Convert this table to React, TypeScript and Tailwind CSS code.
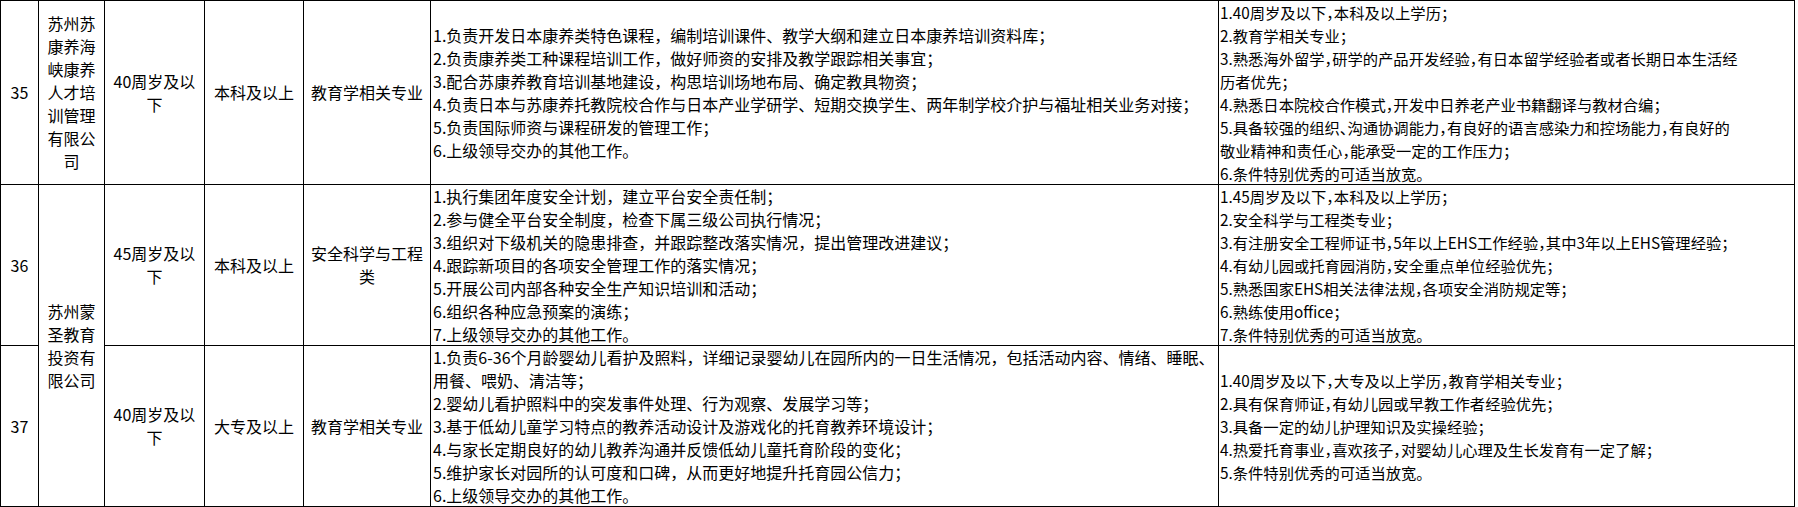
import React from "react";

const font = "font-['Noto_Sans_CJK_SC','Noto_Sans',sans-serif]";

function Center({ lines, className = "" }: { lines: string[]; className?: string }) {
  return (
    <div
      className={`border-r border-b border-black flex flex-col items-center justify-center text-center text-[16px] leading-[23px] text-black overflow-visible ${className}`}
    >
      {lines.map((l, i) => (
        <div key={i} className="whitespace-nowrap">
          {l}
        </div>
      ))}
    </div>
  );
}

function Duties({ lines }: { lines: string[] }) {
  return (
    <div className="border-r border-b border-black flex flex-col justify-center pl-[2px] text-[16px] leading-[23px] text-black overflow-visible">
      {lines.map((l, i) => (
        <div key={i} className="whitespace-nowrap">
          {l}
        </div>
      ))}
    </div>
  );
}

function Reqs({ lines }: { lines: string[] }) {
  return (
    <div className="border-r border-b border-black flex flex-col justify-center pl-[1px] text-[15.3px] leading-[23px] text-black overflow-visible [font-feature-settings:'halt']">
      {lines.map((l, i) => (
        <div key={i} className="whitespace-nowrap">
          {l}
        </div>
      ))}
    </div>
  );
}

export default function App() {
  return (
    <div className={`bg-white w-[1798px] h-[507px] ${font}`}>
      <div className="grid w-[1795px] grid-cols-[38px_66px_100px_99px_127px_788px_576px] grid-rows-[184px_161px_161px] border-l border-t border-black">
        {/* Row 35 */}
        <Center lines={["35"]} />
        <Center lines={["苏州苏", "康养海", "峡康养", "人才培", "训管理", "有限公", "司"]} />
        <Center lines={["40周岁及以", "下"]} />
        <Center lines={["本科及以上"]} />
        <Center lines={["教育学相关专业"]} />
        <Duties
          lines={[
            "1.负责开发日本康养类特色课程，编制培训课件、教学大纲和建立日本康养培训资料库；",
            "2.负责康养类工种课程培训工作，做好师资的安排及教学跟踪相关事宜；",
            "3.配合苏康养教育培训基地建设，构思培训场地布局、确定教具物资；",
            "4.负责日本与苏康养托教院校合作与日本产业学研学、短期交换学生、两年制学校介护与福址相关业务对接；",
            "5.负责国际师资与课程研发的管理工作；",
            "6.上级领导交办的其他工作。",
          ]}
        />
        <Reqs
          lines={[
            "1.40周岁及以下，本科及以上学历；",
            "2.教育学相关专业；",
            "3.熟悉海外留学，研学的产品开发经验，有日本留学经验者或者长期日本生活经",
            "历者优先；",
            "4.熟悉日本院校合作模式，开发中日养老产业书籍翻译与教材合编；",
            "5.具备较强的组织、沟通协调能力，有良好的语言感染力和控场能力，有良好的",
            "敬业精神和责任心，能承受一定的工作压力；",
            "6.条件特别优秀的可适当放宽。",
          ]}
        />

        {/* Row 36 */}
        <Center lines={["36"]} />
        <Center lines={["苏州蒙", "圣教育", "投资有", "限公司"]} className="row-span-2" />
        <Center lines={["45周岁及以", "下"]} />
        <Center lines={["本科及以上"]} />
        <Center lines={["安全科学与工程", "类"]} />
        <Duties
          lines={[
            "1.执行集团年度安全计划，建立平台安全责任制；",
            "2.参与健全平台安全制度，检查下属三级公司执行情况；",
            "3.组织对下级机关的隐患排查，并跟踪整改落实情况，提出管理改进建议；",
            "4.跟踪新项目的各项安全管理工作的落实情况；",
            "5.开展公司内部各种安全生产知识培训和活动；",
            "6.组织各种应急预案的演练；",
            "7.上级领导交办的其他工作。",
          ]}
        />
        <Reqs
          lines={[
            "1.45周岁及以下，本科及以上学历；",
            "2.安全科学与工程类专业；",
            "3.有注册安全工程师证书，5年以上EHS工作经验，其中3年以上EHS管理经验；",
            "4.有幼儿园或托育园消防，安全重点单位经验优先；",
            "5.熟悉国家EHS相关法律法规，各项安全消防规定等；",
            "6.熟练使用office；",
            "7.条件特别优秀的可适当放宽。",
          ]}
        />

        {/* Row 37 */}
        <Center lines={["37"]} />
        <Center lines={["40周岁及以", "下"]} />
        <Center lines={["大专及以上"]} />
        <Center lines={["教育学相关专业"]} />
        <Duties
          lines={[
            "1.负责6-36个月龄婴幼儿看护及照料，详细记录婴幼儿在园所内的一日生活情况，包括活动内容、情绪、睡眠、",
            "用餐、喂奶、清洁等；",
            "2.婴幼儿看护照料中的突发事件处理、行为观察、发展学习等；",
            "3.基于低幼儿童学习特点的教养活动设计及游戏化的托育教养环境设计；",
            "4.与家长定期良好的幼儿教养沟通并反馈低幼儿童托育阶段的变化；",
            "5.维护家长对园所的认可度和口碑，从而更好地提升托育园公信力；",
            "6.上级领导交办的其他工作。",
          ]}
        />
        <Reqs
          lines={[
            "1.40周岁及以下，大专及以上学历，教育学相关专业；",
            "2.具有保育师证，有幼儿园或早教工作者经验优先；",
            "3.具备一定的幼儿护理知识及实操经验；",
            "4.热爱托育事业，喜欢孩子，对婴幼儿心理及生长发育有一定了解；",
            "5.条件特别优秀的可适当放宽。",
          ]}
        />
      </div>
    </div>
  );
}
